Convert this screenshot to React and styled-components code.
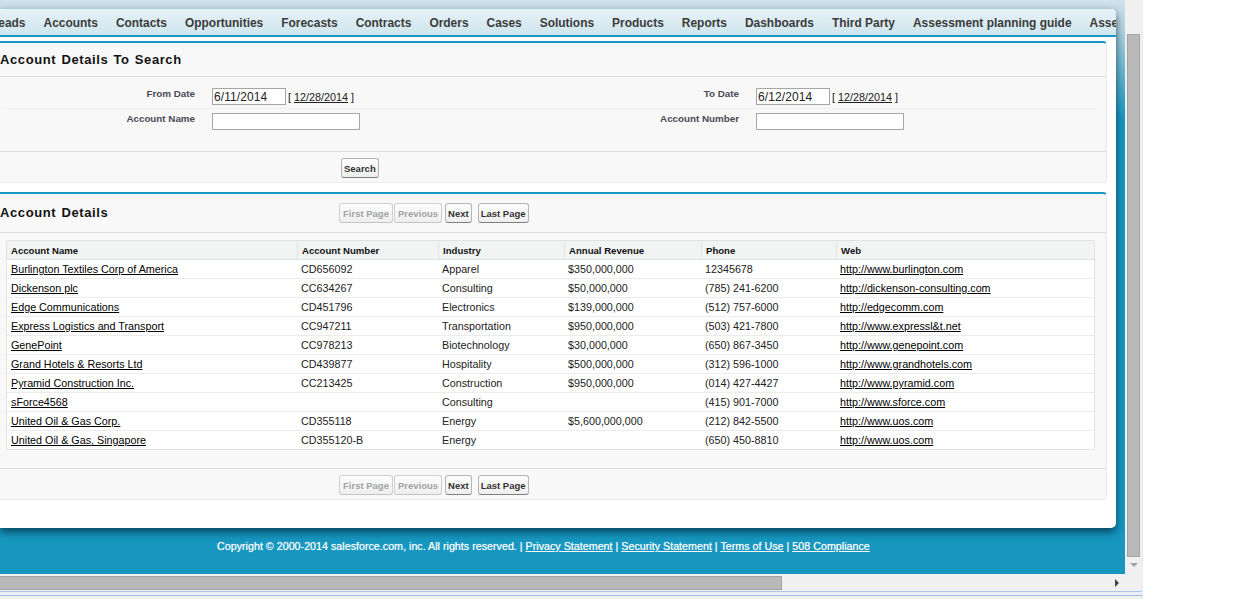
import React from "react"
import styled, { createGlobalStyle } from "styled-components"

const blue = "#1797c0"

const tabs = [
  "Leads", "Accounts", "Contacts", "Opportunities", "Forecasts", "Contracts", "Orders", "Cases",
  "Solutions", "Products", "Reports", "Dashboards", "Third Party", "Assessment planning guide", "Assessments",
]

const columns = [
  { title: "Account Name", width: 291 },
  { title: "Account Number", width: 141 },
  { title: "Industry", width: 126 },
  { title: "Annual Revenue", width: 137 },
  { title: "Phone", width: 135 },
  { title: "Web", width: 257 },
]

const accounts = [
  ["Burlington Textiles Corp of America", "CD656092", "Apparel", "$350,000,000", "12345678", "http://www.burlington.com"],
  ["Dickenson plc", "CC634267", "Consulting", "$50,000,000", "(785) 241-6200", "http://dickenson-consulting.com"],
  ["Edge Communications", "CD451796", "Electronics", "$139,000,000", "(512) 757-6000", "http://edgecomm.com"],
  ["Express Logistics and Transport", "CC947211", "Transportation", "$950,000,000", "(503) 421-7800", "http://www.expressl&t.net"],
  ["GenePoint", "CC978213", "Biotechnology", "$30,000,000", "(650) 867-3450", "http://www.genepoint.com"],
  ["Grand Hotels & Resorts Ltd", "CD439877", "Hospitality", "$500,000,000", "(312) 596-1000", "http://www.grandhotels.com"],
  ["Pyramid Construction Inc.", "CC213425", "Construction", "$950,000,000", "(014) 427-4427", "http://www.pyramid.com"],
  ["sForce4568", "", "Consulting", "", "(415) 901-7000", "http://www.sforce.com"],
  ["United Oil & Gas Corp.", "CD355118", "Energy", "$5,600,000,000", "(212) 842-5500", "http://www.uos.com"],
  ["United Oil & Gas, Singapore", "CD355120-B", "Energy", "", "(650) 450-8810", "http://www.uos.com"],
]

const Pager = () => (
  <PagerGroup>
    <PageButton disabled>First Page</PageButton>
    <PageButton disabled $gap={1}>Previous</PageButton>
    <PageButton $gap={3}>Next</PageButton>
    <PageButton $gap={6}>Last Page</PageButton>
  </PagerGroup>
)

const App = () => (
  <Window>
    <GlobalStyle />
    <Frame>
      <Upper>
        <Viewport>
          <Card>
            <TabBar>
              {tabs.map((tab) => (
                <Tab key={tab}>{tab}</Tab>
              ))}
            </TabBar>

            <Panel>
              <PanelHeader>
                <Title>Account Details To Search</Title>
              </PanelHeader>
              <Form>
                <FormRow $lined>
                  <Label>From Date</Label>
                  <Field>
                    <DateInput defaultValue="6/11/2014" />
                    <DateHint>[ <a href="#">12/28/2014</a> ]</DateHint>
                  </Field>
                  <Label>To Date</Label>
                  <Field>
                    <DateInput defaultValue="6/12/2014" />
                    <DateHint>[ <a href="#">12/28/2014</a> ]</DateHint>
                  </Field>
                </FormRow>
                <FormRow>
                  <Label>Account Name</Label>
                  <Field>
                    <TextInput />
                  </Field>
                  <Label>Account Number</Label>
                  <Field>
                    <TextInput />
                  </Field>
                </FormRow>
              </Form>
              <PanelFooter>
                <PageButton>Search</PageButton>
              </PanelFooter>
            </Panel>

            <Panel $second>
              <PanelHeader $tall>
                <Title $raised>Account Details</Title>
                <Pager />
              </PanelHeader>
              <TableWrap>
                <Table>
                  <colgroup>
                    {columns.map((col) => (
                      <col key={col.title} style={{ width: col.width }} />
                    ))}
                  </colgroup>
                  <thead>
                    <tr>
                      {columns.map((col) => (
                        <Th key={col.title}>{col.title}</Th>
                      ))}
                    </tr>
                  </thead>
                  <tbody>
                    {accounts.map((row) => (
                      <tr key={row[0]}>
                        <Td><a href="#">{row[0]}</a></Td>
                        <Td>{row[1]}</Td>
                        <Td>{row[2]}</Td>
                        <Td>{row[3]}</Td>
                        <Td>{row[4]}</Td>
                        <Td><a href="#">{row[5]}</a></Td>
                      </tr>
                    ))}
                  </tbody>
                </Table>
              </TableWrap>
              <PanelFooter $pager>
                <Pager />
              </PanelFooter>
            </Panel>
          </Card>

          <Footer>
            Copyright © 2000-2014 salesforce.com, inc. All rights reserved. |{" "}
            <a href="#">Privacy Statement</a> | <a href="#">Security Statement</a> |{" "}
            <a href="#">Terms of Use</a> | <a href="#">508 Compliance</a>
          </Footer>
        </Viewport>

        <VerticalBar>
          <VerticalThumb />
          <DownArrow />
        </VerticalBar>
      </Upper>

      <HorizontalBar>
        <HorizontalThumb />
        <RightArrow />
      </HorizontalBar>
      <StatusStrip />
    </Frame>
  </Window>
)

const GlobalStyle = createGlobalStyle`
  html, body {
    margin: 0;
    background: #fff;
    overflow: hidden;
  }
  a {
    color: inherit;
  }
`

const Window = styled.div`
  width: 1259px;
  height: 599px;
  overflow: hidden;
  font-family: "Liberation Sans", Arial, sans-serif;
  color: #222;
`

const Frame = styled.div`
  width: 1142px;
  height: 599px;
  border-right: 1px solid #e4e8f5;
  display: flex;
  flex-direction: column;
`

const Upper = styled.div`
  display: flex;
  height: 574px;
`

const Viewport = styled.div`
  width: 1125px;
  flex: none;
  padding-top: 9px;
  box-sizing: border-box;
  overflow: hidden;
  background: linear-gradient(#cfe3ea 0, #b9d6e1 26px, ${blue} 118px);
`

const Card = styled.div`
  width: 1116px;
  height: 519px;
  box-sizing: border-box;
  background: #fff;
  border-radius: 0 5px 5px 0;
  box-shadow: 0 4px 8px rgba(0, 30, 50, 0.7);
`

const TabBar = styled.div`
  display: flex;
  height: 26px;
  overflow: hidden;
  border-bottom: 2px solid ${blue};
  border-radius: 0 5px 0 0;
  background: linear-gradient(#e6f2f7, #cfe5ed);
`

const Tab = styled.span`
  flex: none;
  padding: 0 9px;
  font-size: 11.95px;
  font-weight: bold;
  line-height: 28px;
  color: #3b3b3b;

  &:first-child {
    margin-left: -18px;
  }
`

const Panel = styled.section`
  width: 1107px;
  box-sizing: border-box;
  margin-top: ${(props) => (props.$second ? "9px" : "4px")};
  height: ${(props) => (props.$second ? "308px" : "142px")};
  background: #f8f8f8;
  border-top: 2px solid ${blue};
  border-right: 1px solid #eaeaea;
  border-bottom: 1px solid #eaeaea;
  border-radius: 0 4px 4px 0;
  display: flex;
  flex-direction: column;
`

const PanelHeader = styled.div`
  flex: none;
  height: ${(props) => (props.$tall ? "38px" : "33px")};
  display: flex;
  align-items: center;
  border-bottom: 1px solid #dbdbdb;
`

const Title = styled.h2`
  margin: 0;
  width: 339px;
  padding-bottom: ${(props) => (props.$raised ? "2px" : "0")};
  box-sizing: border-box;
  font-size: 13px;
  font-weight: bold;
  letter-spacing: 0.6px;
  word-spacing: 1px;
  color: #111;
`

const Form = styled.div`
  flex: 1;
  padding: 11px 10px 0 6px;
`

const FormRow = styled.div`
  display: grid;
  grid-template-columns: 189px 355px 189px 1fr;
  height: ${(props) => (props.$lined ? "20px" : "24px")};
  padding-top: ${(props) => (props.$lined ? "0" : "4px")};
  border-bottom: ${(props) => (props.$lined ? "1px solid #efefef" : "none")};
`

const Label = styled.label`
  text-align: right;
  font-size: 9.8px;
  font-weight: bold;
  line-height: 12px;
  color: #4a4a56;
`

const Field = styled.div`
  padding-left: 17px;
  display: flex;
  align-items: flex-start;
`

const DateInput = styled.input`
  width: 74px;
  height: 17px;
  box-sizing: border-box;
  padding: 0 1px;
  border: 1px solid #a5a5a5;
  font: 12px "Liberation Sans", Arial, sans-serif;
  letter-spacing: 0.1px;
  color: #222;
  background: #fff;
`

const TextInput = styled(DateInput)`
  width: 148px;
`

const DateHint = styled.span`
  margin-left: 2px;
  font-size: 10.8px;
  line-height: 18px;
  color: #222;
`

const PanelFooter = styled.div`
  flex: none;
  height: 31px;
  box-sizing: border-box;
  display: flex;
  align-items: center;
  padding-top: 2px;
  padding-left: ${(props) => (props.$pager ? "339px" : "341px")};
  border-top: 1px solid #dbdbdb;
`

const PagerGroup = styled.div`
  display: flex;
`

const PageButton = styled.button`
  flex: none;
  height: 20px;
  margin-left: ${(props) => props.$gap || 0}px;
  padding: 0 ${(props) => (props.disabled ? "3px" : "2px")};
  font: bold 9.5px "Liberation Sans", Arial, sans-serif;
  color: ${(props) => (props.disabled ? "#a3a3a3" : "#333")};
  background: linear-gradient(#fdfdfd, #eeeeee);
  border: 1px solid ${(props) => (props.disabled ? "#cfcfcf" : "#b5b5b5")};
  border-bottom-color: ${(props) => (props.disabled ? "#c4c4c4" : "#7f7f7f")};
  border-radius: 3px;
`

const TableWrap = styled.div`
  flex: 1;
  padding: 7px 0 0 6px;
`

const Table = styled.table`
  width: 1089px;
  table-layout: fixed;
  border-collapse: separate;
  border-spacing: 0;
  background: #fff;
  border: 1px solid #e0e3e5;
  border-radius: 2px;
`

const Th = styled.th`
  height: 19px;
  padding: 0 0 0 4px;
  box-sizing: border-box;
  text-align: left;
  font-size: 9.6px;
  font-weight: bold;
  color: #111;
  background: #f2f3f3;
  border-right: 1px solid #e0e3e5;
  border-bottom: 1px solid #e0e3e5;

  &:last-child {
    border-right: none;
  }
`

const Td = styled.td`
  height: 19px;
  padding: 0 0 0 3px;
  box-sizing: border-box;
  font-size: 10.75px;
  color: #222;
  white-space: nowrap;
  border-bottom: 1px solid #ececec;

  &:first-child {
    padding-left: 4px;
  }
  a {
    color: #000;
  }
  tr:last-child & {
    height: 18px;
    border-bottom: none;
  }
`

const Footer = styled.div`
  height: 46px;
  padding: 12px 0 0 217px;
  box-sizing: border-box;
  white-space: nowrap;
  font-size: 10.73px;
  line-height: 13px;
  color: #fff;
  text-shadow: 0 0 1px rgba(255, 255, 255, 0.6);
`

const VerticalBar = styled.div`
  flex: 1;
  background: #f0f0f0;
  padding: 34px 2px 0;
  display: flex;
  flex-direction: column;
  align-items: center;
`

const VerticalThumb = styled.div`
  width: 100%;
  box-sizing: border-box;
  height: 523px;
  background: #b9b9b9;
  border: 1px solid #a3a3a3;
`

const DownArrow = styled.div`
  margin-top: 6px;
  border-left: 4px solid transparent;
  border-right: 4px solid transparent;
  border-top: 4px solid #a3a3a3;
`

const HorizontalBar = styled.div`
  height: 17px;
  background: #f0f0f0;
  display: flex;
  align-items: center;
  justify-content: space-between;
  padding-right: 23px;
`

const HorizontalThumb = styled.div`
  width: 782px;
  height: 14px;
  box-sizing: border-box;
  background: #b9b9b9;
  border: 1px solid #a3a3a3;
  border-left: none;
`

const RightArrow = styled.div`
  border-top: 4px solid transparent;
  border-bottom: 4px solid transparent;
  border-left: 4px solid #444;
`

const StatusStrip = styled.div`
  flex: 1;
  background: linear-gradient(#a9c6e6 0 1px, #eaf0f9 1px 4px, #a9bcdc 4px 5px, #f1f1f1 5px);
`

export default App
